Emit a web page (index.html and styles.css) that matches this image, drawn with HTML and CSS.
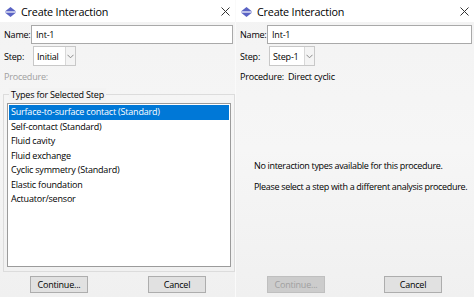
FILE: index.html
```html
<!DOCTYPE html>
<html>
<head>
<meta charset="utf-8">
<link rel="stylesheet" href="styles.css">
</head>
<body>
<div class="screen">
  <div class="dialog left">
    <div class="titlebar">
      <svg class="appicon" width="11" height="10" viewBox="0 0 11 10"><path d="M5.5 0 L10.5 4 L0.5 4 Z" fill="#5a63c4"/><path d="M0.5 6 L10.5 6 L5.5 10 Z" fill="#5a63c4"/><rect x="0" y="4.4" width="11" height="1.2" fill="#8f95d8"/></svg>
      <span class="title">Create Interaction</span>
      <svg class="close" width="9" height="9" viewBox="0 0 9 9"><path d="M0.5 0.5 L8.5 8.5 M8.5 0.5 L0.5 8.5" stroke="#333" stroke-width="1"/></svg>
    </div>
    <div class="content">
      <div class="row name-row">
        <span class="lbl">Name:</span>
        <div class="input">Int-1</div>
      </div>
      <div class="row step-row">
        <span class="lbl">Step:</span>
        <div class="select s-initial"><span class="val">Initial</span><span class="arrow"><svg width="7" height="5" viewBox="0 0 7 5"><path d="M0.5 0.8 L3.5 3.8 L6.5 0.8" fill="none" stroke="#8a8a8a" stroke-width="1"/></svg></span></div>
      </div>
      <div class="procedure disabled">Procedure:</div>
      <div class="group">
        <div class="legend">Types for Selected Step</div>
        <div class="listbox">
          <div class="item selected">Surface-to-surface contact (Standard)</div>
          <div class="item">Self-contact (Standard)</div>
          <div class="item">Fluid cavity</div>
          <div class="item">Fluid exchange</div>
          <div class="item">Cyclic symmetry (Standard)</div>
          <div class="item">Elastic foundation</div>
          <div class="item">Actuator/sensor</div>
        </div>
      </div>
      <div class="buttons">
        <div class="btn">Continue...</div>
        <div class="btn">Cancel</div>
      </div>
    </div>
  </div>
  <div class="dialog right">
    <div class="titlebar">
      <svg class="appicon" width="11" height="10" viewBox="0 0 11 10"><path d="M5.5 0 L10.5 4 L0.5 4 Z" fill="#5a63c4"/><path d="M0.5 6 L10.5 6 L5.5 10 Z" fill="#5a63c4"/><rect x="0" y="4.4" width="11" height="1.2" fill="#8f95d8"/></svg>
      <span class="title">Create Interaction</span>
      <svg class="close" width="9" height="9" viewBox="0 0 9 9"><path d="M0.5 0.5 L8.5 8.5 M8.5 0.5 L0.5 8.5" stroke="#333" stroke-width="1"/></svg>
    </div>
    <div class="content">
      <div class="row name-row">
        <span class="lbl">Name:</span>
        <div class="input">Int-1</div>
      </div>
      <div class="row step-row">
        <span class="lbl">Step:</span>
        <div class="select s-step"><span class="val">Step-1</span><span class="arrow"><svg width="7" height="5" viewBox="0 0 7 5"><path d="M0.5 0.8 L3.5 3.8 L6.5 0.8" fill="none" stroke="#8a8a8a" stroke-width="1"/></svg></span></div>
      </div>
      <div class="procedure"><span class="plbl">Procedure:</span>Direct cyclic</div>
      <div class="messages">
        <div class="msg">No interaction types available for this procedure.</div>
        <div class="msg">Please select a step with a different analysis procedure.</div>
      </div>
      <div class="buttons">
        <div class="btn disabled-btn">Continue...</div>
        <div class="btn">Cancel</div>
      </div>
    </div>
  </div>
</div>
</body>
</html>
```

FILE: styles.css
```css
* { box-sizing: border-box; }
html, body { margin: 0; padding: 0; }
body {
  width: 474px;
  height: 297px;
  overflow: hidden;
  background: #f0f0f0;
  font-family: "Open Sans", "Noto Sans", sans-serif;
  font-size: 9px;
  letter-spacing: -0.2px;
  color: #000;
}
.screen {
  display: flex;
  height: 297px;
}
.dialog {
  display: flex;
  flex-direction: column;
  height: 297px;
  background: linear-gradient(180deg, #f3f3f3 0%, #f6f6f6 50%, #f0f0f0 100%);
}
.dialog.left { width: 236px; border-right: 1px solid #fafafa; }
.dialog.right { width: 238px; }
.titlebar {
  height: 22px;
  flex: none;
  background: #fff;
  display: flex;
  align-items: center;
  padding: 1px 0 0 5px;
  font-size: 10.8px;
}
.appicon { flex: none; }
.title { margin-left: 5px; flex: 1; }
.close { margin-right: 5px; }
.content {
  flex: 1;
  display: flex;
  flex-direction: column;
  padding: 2px 2px 4px 4px;
}
.row { display: flex; align-items: center; }
.lbl { width: 27px; flex: none; }
.name-row { height: 20px; }
.input {
  flex: 1;
  height: 19px;
  background: #fff;
  border: 1px solid #a9a9a9;
  padding-left: 4px;
  display: flex;
  align-items: center;
}
.step-row { height: 20px; margin-top: 2px; }
.select {
  height: 20px;
  background: #fff;
  border: 1px solid #c8c8c8;
  display: flex;
  align-items: center;
  margin-left: 2px;
}
.select .val { padding-left: 3px; flex: 1; }
.select .arrow {
  width: 10px;
  height: 18px;
  border-left: 1px solid #d8d8d8;
  background: #f4f4f4;
  display: flex;
  align-items: center;
  justify-content: center;
}
.s-initial { width: 43px; }
.s-step { width: 46px; }
.procedure { height: 18px; display: flex; align-items: center; margin-top: 1px; }
.procedure.disabled { color: #a0a0a0; }
.plbl { width: 48px; }
.group {
  margin-top: 9px;
  margin-left: -1px;
  width: 232px;
  height: 178px;
  border: 1px solid #dcdcdc;
  position: relative;
  padding: 8px 3px 0 3px;
}
.legend {
  position: absolute;
  top: -7px;
  left: 5px;
  background: #f3f3f3;
  padding: 0 2px;
}
.listbox {
  height: 164px;
  background: #fff;
  border: 1px solid #9b9b9b;
  padding: 1px 1px;
}
.item {
  height: 14.5px;
  line-height: 14.5px;
  padding-left: 2px;
}
.item.selected { background: #0078d7; color: #fff; }
.buttons {
  margin-top: auto;
  display: flex;
  gap: 60px;
  padding-left: 26px;
}
.btn {
  width: 58px;
  height: 17px;
  background: #e1e1e1;
  border: 1px solid #adadad;
  display: flex;
  align-items: center;
  justify-content: center;
}
.disabled-btn { background: #cccccc; border-color: #bfbfbf; color: #a0a0a0; }
.right .buttons { padding-left: 27px; gap: 59px; }
.messages {
  margin-top: 70px;
  padding-left: 14px;
  white-space: nowrap;
  letter-spacing: -0.32px;
}
.msg { height: 21px; line-height: 21px; }
```
